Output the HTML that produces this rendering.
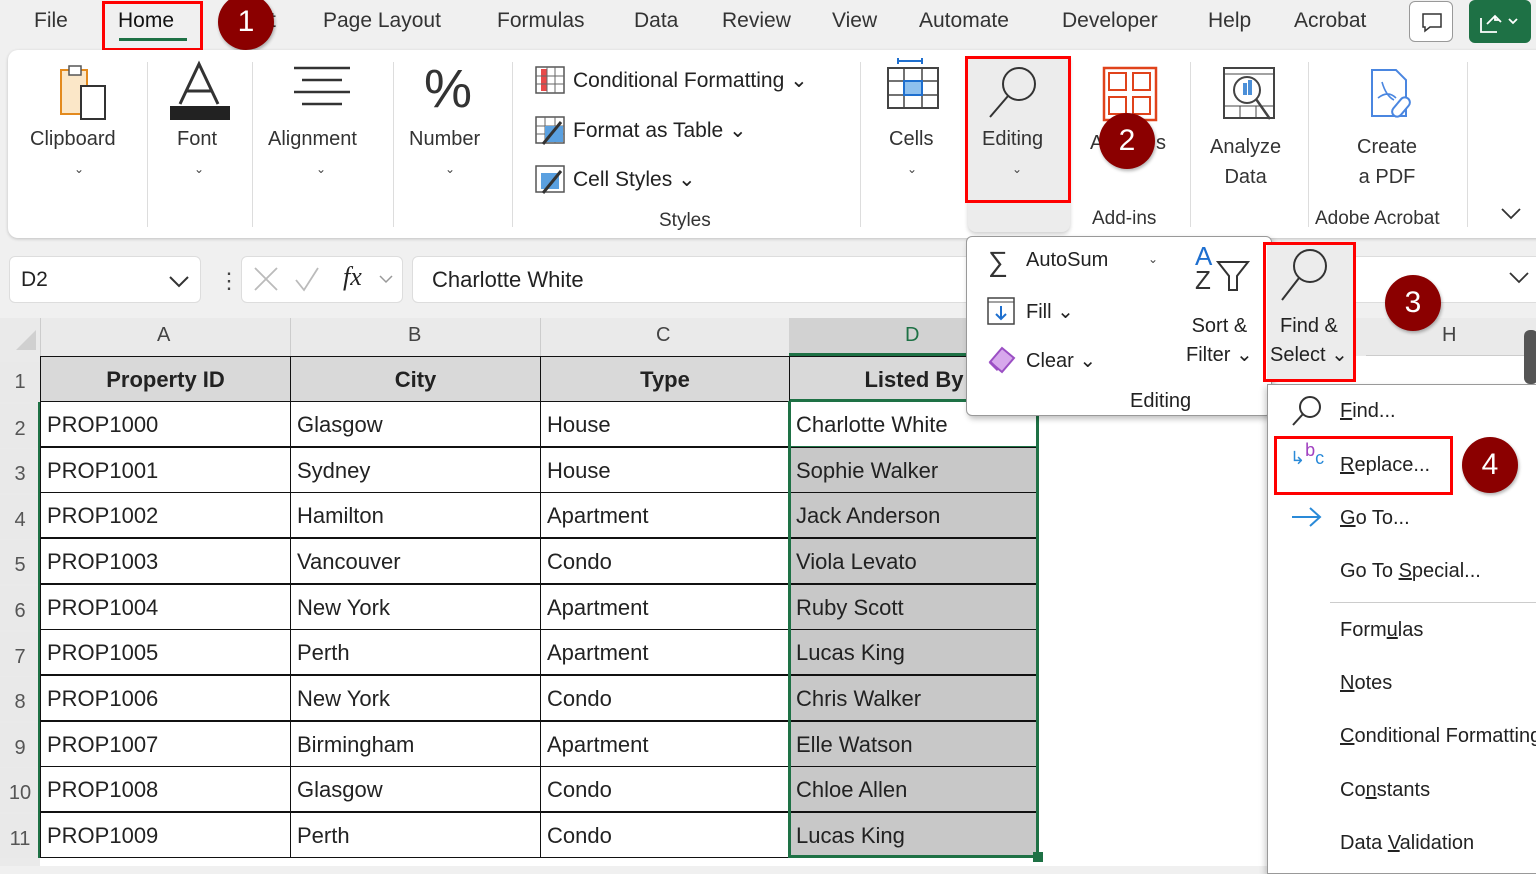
<!DOCTYPE html>
<html><head><meta charset="utf-8"><style>
*{margin:0;padding:0;box-sizing:border-box}
body{width:1536px;height:866px;overflow:hidden;background:#f0f0f0;font-family:"Liberation Sans",sans-serif;color:#222;position:relative}
.a{position:absolute}
.t{font-size:21px;color:#333;top:9px}
.rb{left:8px;top:50px;width:1540px;height:188px;background:#fff;border-radius:10px;box-shadow:0 1px 3px rgba(0,0,0,.2)}
.lbl{font-size:20px;color:#333;text-align:center}
.sep{width:1px;background:#ddd;top:62px;height:165px}
.chev{font-size:12px;color:#444}
.circ{width:56px;height:56px;border-radius:50%;background:#8b0000;color:#fff;font-size:30px;text-align:center;line-height:56px;box-shadow:1px 2px 3px rgba(0,0,0,.3)}
.red{border:3px solid #f00}
.cell{position:absolute;height:46px;border:1.5px solid #111;font-size:22px;line-height:46px;padding-left:6px;background:#fff;white-space:nowrap;overflow:hidden}
.rh{position:absolute;left:0;width:40px;font-size:20px;color:#555;text-align:center;background:#e9e9e9}
.mi{position:absolute;left:1340px;font-size:20px;color:#222;white-space:nowrap}
</style></head><body>
<!-- tabs -->
<div class="a t" style="left:34px">File</div>
<div class="a t" style="left:118px;color:#111">Home</div>
<div class="a" style="left:119px;top:38px;width:68px;height:3px;background:#1e7145"></div>
<div class="a t" style="left:270px">t</div>
<div class="a t" style="left:323px">Page Layout</div>
<div class="a t" style="left:497px">Formulas</div>
<div class="a t" style="left:634px">Data</div>
<div class="a t" style="left:722px">Review</div>
<div class="a t" style="left:832px">View</div>
<div class="a t" style="left:919px">Automate</div>
<div class="a t" style="left:1062px">Developer</div>
<div class="a t" style="left:1208px">Help</div>
<div class="a t" style="left:1294px">Acrobat</div>
<div class="a" style="left:1409px;top:1px;width:44px;height:41px;border:1px solid #999;border-radius:6px;background:#fff"><svg width="44" height="40"><path d="M13 12h18v13H20l-5 4v-4h-2z" fill="none" stroke="#333" stroke-width="1.5"/></svg></div>
<div class="a" style="left:1469px;top:0;width:62px;height:43px;border-radius:6px;background:#1e7145"><svg width="62" height="43"><path d="M12 18v14h16M18 24l8-8 6 6M26 16v4h4" fill="none" stroke="#fff" stroke-width="1.8"/><path d="M40 19l4 4 4-4" fill="none" stroke="#fff" stroke-width="1.8"/></svg></div>
<div class="a red" style="left:102px;top:1px;width:101px;height:50px"></div>
<div class="a circ" style="left:218px;top:-6px">1</div>

<!-- ribbon -->
<div class="a rb"></div>
<svg class="a" style="left:55px;top:60px" width="60" height="65"><rect x="6" y="10" width="26" height="44" fill="#fbe7c8" stroke="#e38a1e" stroke-width="2"/><rect x="14" y="6" width="12" height="9" fill="#fff" stroke="#555" stroke-width="1.5"/><rect x="26" y="26" width="24" height="33" fill="#fff" stroke="#333" stroke-width="2"/></svg>
<div class="a lbl" style="left:30px;top:128px">Clipboard</div><div class="a chev" style="left:74px;top:162px">⌄</div>
<div class="a sep" style="left:147px"></div>
<svg class="a" style="left:168px;top:60px" width="64" height="62"><path d="M12 44L31 4L50 44M18 31h26" fill="none" stroke="#333" stroke-width="3"/><rect x="2" y="46" width="60" height="14" fill="#222"/></svg>
<div class="a lbl" style="left:177px;top:128px">Font</div><div class="a chev" style="left:194px;top:162px">⌄</div>
<div class="a sep" style="left:252px"></div>
<svg class="a" style="left:292px;top:66px" width="60" height="45"><path d="M2 2h56M10 14h40M2 26h56M10 38h40" stroke="#333" stroke-width="2.5"/></svg>
<div class="a lbl" style="left:268px;top:128px">Alignment</div><div class="a chev" style="left:316px;top:162px">⌄</div>
<div class="a sep" style="left:393px"></div>
<div class="a" style="left:424px;top:58px;font-size:54px;color:#333">%</div>
<div class="a lbl" style="left:409px;top:128px">Number</div><div class="a chev" style="left:445px;top:162px">⌄</div>
<div class="a sep" style="left:512px"></div>
<svg class="a" style="left:535px;top:66px" width="30" height="30"><rect x="1" y="1" width="28" height="26" fill="#fff" stroke="#555" stroke-width="1.5"/><rect x="6" y="3" width="6" height="22" fill="#e84a4a"/><path d="M1 10h28M1 18h28M12 1v26M20 1v26" stroke="#666"/></svg>
<div class="a" style="left:573px;top:68px;font-size:21px">Conditional Formatting ⌄</div>
<svg class="a" style="left:535px;top:116px" width="30" height="30"><rect x="1" y="1" width="28" height="26" fill="#fff" stroke="#555" stroke-width="1.5"/><path d="M1 10h28M1 18h28M10 1v26M20 1v26" stroke="#666"/><rect x="10" y="10" width="18" height="16" fill="#5aa0e0"/><path d="M8 28L26 6" stroke="#333" stroke-width="3"/></svg>
<div class="a" style="left:573px;top:118px;font-size:21px">Format as Table ⌄</div>
<svg class="a" style="left:535px;top:165px" width="30" height="30"><rect x="1" y="1" width="28" height="26" fill="#fff" stroke="#555" stroke-width="1.5"/><rect x="6" y="8" width="18" height="16" fill="#5aa0e0"/><path d="M8 28L26 6" stroke="#333" stroke-width="3"/></svg>
<div class="a" style="left:573px;top:167px;font-size:21px">Cell Styles ⌄</div>
<div class="a lbl" style="left:659px;top:210px;font-size:19px">Styles</div>
<div class="a sep" style="left:860px"></div>
<svg class="a" style="left:886px;top:58px" width="56" height="54"><path d="M12 3h24M12 0v6M36 0v6" stroke="#1e6fcf" stroke-width="2"/><rect x="2" y="10" width="50" height="40" fill="#fff" stroke="#444" stroke-width="2"/><path d="M2 23h50M2 37h50M18 10v40M36 10v40" stroke="#444" stroke-width="1.5"/><rect x="18" y="23" width="18" height="14" fill="#8ec0ee" stroke="#1e6fcf" stroke-width="2"/></svg>
<div class="a lbl" style="left:889px;top:128px">Cells</div><div class="a chev" style="left:907px;top:162px">⌄</div>
<div class="a sep" style="left:1190px"></div>
<div class="a" style="left:968px;top:57px;width:102px;height:175px;background:#ececec;border-radius:0 0 8px 8px;box-shadow:0 2px 4px rgba(0,0,0,.2)"></div>
<svg class="a" style="left:983px;top:60px" width="70" height="60"><circle cx="36" cy="24" r="16" fill="none" stroke="#333" stroke-width="2"/><path d="M25 36L7 57" stroke="#333" stroke-width="2"/></svg>
<div class="a lbl" style="left:982px;top:128px">Editing</div><div class="a chev" style="left:1012px;top:162px">⌄</div>
<div class="a red" style="left:965px;top:56px;width:106px;height:147px"></div>
<svg class="a" style="left:1102px;top:66px" width="56" height="56"><rect x="2" y="2" width="52" height="52" fill="none" stroke="#e0431b" stroke-width="2.5"/><rect x="7" y="7" width="17" height="17" fill="none" stroke="#e0431b" stroke-width="2"/><rect x="31" y="7" width="17" height="17" fill="none" stroke="#e0431b" stroke-width="2"/><rect x="7" y="31" width="17" height="17" fill="none" stroke="#e0431b" stroke-width="2"/><rect x="31" y="31" width="17" height="17" fill="none" stroke="#e0431b" stroke-width="2"/></svg>
<div class="a lbl" style="left:1090px;top:132px">A</div><div class="a lbl" style="left:1156px;top:132px">s</div>
<div class="a circ" style="left:1099px;top:113px">2</div>
<div class="a lbl" style="left:1092px;top:208px;font-size:19px">Add-ins</div>
<svg class="a" style="left:1222px;top:66px" width="58" height="56"><rect x="2" y="2" width="50" height="50" fill="#fff" stroke="#444" stroke-width="2"/><path d="M2 8h50M2 40h50M18 40v12M34 40v12" stroke="#444"/><circle cx="25" cy="24" r="13" fill="#fff" stroke="#444" stroke-width="2"/><rect x="21" y="17" width="4" height="12" fill="#4b8fd8"/><rect x="26" y="14" width="4" height="15" fill="#4b8fd8"/><path d="M34 33l14 20" stroke="#444" stroke-width="2.5"/></svg>
<div class="a lbl" style="left:1210px;top:132px;line-height:30px">Analyze<br>Data</div>
<div class="a sep" style="left:1308px"></div>
<svg class="a" style="left:1368px;top:68px" width="58" height="58"><path d="M4 2h24l10 10v36H4z" fill="#fff" stroke="#4a86e0" stroke-width="2"/><path d="M14 14q4 14 12 18M10 30q10-8 18 0" fill="none" stroke="#4a86e0" stroke-width="1.6"/><rect x="28" y="28" width="10" height="22" rx="5" transform="rotate(40 33 39)" fill="#fff" stroke="#4a86e0" stroke-width="2"/></svg>
<div class="a lbl" style="left:1357px;top:132px;line-height:30px">Create<br>a PDF</div>
<div class="a lbl" style="left:1315px;top:208px;font-size:19px">Adobe Acrobat</div>
<div class="a sep" style="left:1467px"></div>
<svg class="a" style="left:1500px;top:205px" width="22" height="16"><path d="M2 4l9 9 9-9" fill="none" stroke="#333" stroke-width="1.8"/></svg>

<!-- formula bar -->
<div class="a" style="left:9px;top:256px;width:192px;height:47px;background:#fff;border:1px solid #ddd;border-radius:6px"></div>
<div class="a" style="left:21px;top:268px;font-size:21px">D2</div>
<svg class="a" style="left:168px;top:274px" width="22" height="14"><path d="M2 3l9 9 9-9" fill="none" stroke="#333" stroke-width="2"/></svg>
<div class="a" style="left:218px;top:268px;font-size:22px;color:#444">⋮</div>
<div class="a" style="left:241px;top:256px;width:162px;height:47px;background:#fff;border:1px solid #ddd;border-radius:6px"></div>
<svg class="a" style="left:250px;top:262px" width="150" height="36"><path d="M5 6l22 22M27 6L5 28" stroke="#bbb" stroke-width="1.8"/><path d="M46 18l8 10 14-22" fill="none" stroke="#bbb" stroke-width="1.8"/><path d="M130 14l6 6 6-6" fill="none" stroke="#999" stroke-width="1.5"/></svg>
<div class="a" style="left:343px;top:262px;font-size:26px;font-style:italic;font-family:'Liberation Serif',serif">fx</div>
<div class="a" style="left:412px;top:256px;width:1130px;height:47px;background:#fff;border:1px solid #ddd;border-radius:6px"></div>
<div class="a" style="left:432px;top:267px;font-size:22px">Charlotte White</div>
<svg class="a" style="left:1508px;top:270px" width="22" height="14"><path d="M2 3l9 9 9-9" fill="none" stroke="#333" stroke-width="1.8"/></svg>

<!-- grid -->
<div class="a" style="left:0;top:318px;width:1536px;height:38px;background:#eaeaea"></div>
<div class="a" style="left:0;top:356px;width:40px;height:510px;background:#eaeaea"></div>
<div class="a" style="left:40px;top:356px;width:1496px;height:510px;background:#fff"></div>
<svg class="a" style="left:14px;top:328px" width="24" height="24"><path d="M22 2v20H2z" fill="#d0d0d0"/></svg>
<div class="a" style="left:40px;top:318px;width:1px;height:38px;background:#ccc"></div>
<div class="a" style="left:290px;top:318px;width:1px;height:38px;background:#ccc"></div>
<div class="a" style="left:540px;top:318px;width:1px;height:38px;background:#ccc"></div>
<div class="a" style="left:789px;top:318px;width:250px;height:38px;background:#d2d2d2;border-bottom:3px solid #1e7145"></div>
<div class="a" style="left:157px;top:324px;font-size:20px;color:#444">A</div>
<div class="a" style="left:408px;top:324px;font-size:20px;color:#444">B</div>
<div class="a" style="left:656px;top:324px;font-size:20px;color:#444">C</div>
<div class="a" style="left:905px;top:324px;font-size:20px;color:#1e7145">D</div>
<div class="a" style="left:1442px;top:324px;font-size:20px;color:#444">H</div>
<div class="a" style="left:1366px;top:355px;width:170px;height:1px;background:#ccc"></div>
<div class="a" style="left:1524px;top:330px;width:14px;height:54px;background:#555;border-radius:6px"></div>

<!-- rows -->
<div class="rh" style="top:362px;height:40px;line-height:40px">1</div>
<div class="rh" style="top:404px;height:44px;line-height:50px">2</div>
<div class="rh" style="top:449px;height:44px;line-height:50px">3</div>
<div class="rh" style="top:495px;height:44px;line-height:50px">4</div>
<div class="rh" style="top:540px;height:44px;line-height:50px">5</div>
<div class="rh" style="top:586px;height:44px;line-height:50px">6</div>
<div class="rh" style="top:632px;height:44px;line-height:50px">7</div>
<div class="rh" style="top:677px;height:44px;line-height:50px">8</div>
<div class="rh" style="top:723px;height:44px;line-height:50px">9</div>
<div class="rh" style="top:768px;height:44px;line-height:50px">10</div>
<div class="rh" style="top:814px;height:44px;line-height:50px">11</div>
<div class="a" style="left:38px;top:402px;width:3px;height:456px;background:#1e7145"></div>

<div class="cell" style="left:40px;top:356px;width:251px;background:#d9d9d9;font-weight:bold;text-align:center;padding:0">Property ID</div>
<div class="cell" style="left:290px;top:356px;width:251px;background:#d9d9d9;font-weight:bold;text-align:center;padding:0">City</div>
<div class="cell" style="left:540px;top:356px;width:250px;background:#d9d9d9;font-weight:bold;text-align:center;padding:0">Type</div>
<div class="cell" style="left:789px;top:356px;width:250px;background:#d9d9d9;font-weight:bold;text-align:center;padding:0;border-bottom:3px solid #1e7145">Listed By</div>

<div class="cell" style="left:40px;top:401px;width:251px">PROP1000</div><div class="cell" style="left:290px;top:401px;width:251px">Glasgow</div><div class="cell" style="left:540px;top:401px;width:250px">House</div><div class="cell" style="left:789px;top:401px;width:250px;border-color:#1e7145">Charlotte White</div>
<div class="cell" style="left:40px;top:447px;width:251px">PROP1001</div><div class="cell" style="left:290px;top:447px;width:251px">Sydney</div><div class="cell" style="left:540px;top:447px;width:250px">House</div><div class="cell" style="left:789px;top:447px;width:250px;background:#c8c8c8">Sophie Walker</div>
<div class="cell" style="left:40px;top:492px;width:251px">PROP1002</div><div class="cell" style="left:290px;top:492px;width:251px">Hamilton</div><div class="cell" style="left:540px;top:492px;width:250px">Apartment</div><div class="cell" style="left:789px;top:492px;width:250px;background:#c8c8c8">Jack Anderson</div>
<div class="cell" style="left:40px;top:538px;width:251px">PROP1003</div><div class="cell" style="left:290px;top:538px;width:251px">Vancouver</div><div class="cell" style="left:540px;top:538px;width:250px">Condo</div><div class="cell" style="left:789px;top:538px;width:250px;background:#c8c8c8">Viola Levato</div>
<div class="cell" style="left:40px;top:584px;width:251px">PROP1004</div><div class="cell" style="left:290px;top:584px;width:251px">New York</div><div class="cell" style="left:540px;top:584px;width:250px">Apartment</div><div class="cell" style="left:789px;top:584px;width:250px;background:#c8c8c8">Ruby Scott</div>
<div class="cell" style="left:40px;top:629px;width:251px">PROP1005</div><div class="cell" style="left:290px;top:629px;width:251px">Perth</div><div class="cell" style="left:540px;top:629px;width:250px">Apartment</div><div class="cell" style="left:789px;top:629px;width:250px;background:#c8c8c8">Lucas King</div>
<div class="cell" style="left:40px;top:675px;width:251px">PROP1006</div><div class="cell" style="left:290px;top:675px;width:251px">New York</div><div class="cell" style="left:540px;top:675px;width:250px">Condo</div><div class="cell" style="left:789px;top:675px;width:250px;background:#c8c8c8">Chris Walker</div>
<div class="cell" style="left:40px;top:721px;width:251px">PROP1007</div><div class="cell" style="left:290px;top:721px;width:251px">Birmingham</div><div class="cell" style="left:540px;top:721px;width:250px">Apartment</div><div class="cell" style="left:789px;top:721px;width:250px;background:#c8c8c8">Elle Watson</div>
<div class="cell" style="left:40px;top:766px;width:251px">PROP1008</div><div class="cell" style="left:290px;top:766px;width:251px">Glasgow</div><div class="cell" style="left:540px;top:766px;width:250px">Condo</div><div class="cell" style="left:789px;top:766px;width:250px;background:#c8c8c8">Chloe Allen</div>
<div class="cell" style="left:40px;top:812px;width:251px">PROP1009</div><div class="cell" style="left:290px;top:812px;width:251px">Perth</div><div class="cell" style="left:540px;top:812px;width:250px">Condo</div><div class="cell" style="left:789px;top:812px;width:250px;background:#c8c8c8">Lucas King</div>
<div class="a" style="left:788px;top:401px;width:3px;height:457px;background:#1e7145"></div>
<div class="a" style="left:1036px;top:401px;width:3px;height:457px;background:#1e7145"></div>
<div class="a" style="left:788px;top:855px;width:251px;height:3px;background:#1e7145"></div>
<div class="a" style="left:1033px;top:852px;width:10px;height:10px;background:#1e7145"></div>

<!-- editing dropdown -->
<div class="a" style="left:966px;top:236px;width:306px;height:180px;background:#fff;border:1px solid #999;border-radius:6px;box-shadow:2px 3px 6px rgba(0,0,0,.25)"></div>
<div class="a" style="left:988px;top:246px;font-size:28px;color:#333">∑</div>
<div class="a" style="left:1026px;top:249px;font-size:20px">AutoSum</div><div class="a chev" style="left:1148px;top:252px">⌄</div>
<svg class="a" style="left:986px;top:296px" width="30" height="30"><rect x="2" y="2" width="26" height="26" fill="#fff" stroke="#444" stroke-width="1.5"/><path d="M2 6h26" stroke="#444"/><path d="M15 10v13M10 18l5 5 5-5" fill="none" stroke="#1e6fcf" stroke-width="2"/></svg>
<div class="a" style="left:1026px;top:299px;font-size:20px">Fill ⌄</div>
<svg class="a" style="left:986px;top:344px" width="32" height="32"><path d="M4 18L16 4l12 10-12 14z" fill="#d7a8ec" stroke="#9b4fc4" stroke-width="2"/><path d="M4 18l8 8" stroke="#9b4fc4" stroke-width="3"/></svg>
<div class="a" style="left:1026px;top:348px;font-size:20px">Clear ⌄</div>
<div class="a" style="left:1195px;top:244px;font-size:26px;color:#1e6fcf;line-height:24px">A<br><span style="color:#333">Z</span></div>
<svg class="a" style="left:1215px;top:258px" width="38" height="36"><path d="M3 4h30L22 18v14l-8 0V18z" fill="none" stroke="#333" stroke-width="2"/></svg>
<div class="a" style="left:1186px;top:312px;font-size:20px;line-height:29px;text-align:center">Sort &amp;<br>Filter ⌄</div>
<div class="a" style="left:1267px;top:242px;width:88px;height:140px;background:#ececec"></div>
<svg class="a" style="left:1272px;top:244px" width="70" height="60"><circle cx="38" cy="22" r="16" fill="none" stroke="#333" stroke-width="2"/><path d="M27 34L10 56" stroke="#333" stroke-width="2"/></svg>
<div class="a" style="left:1270px;top:312px;font-size:20px;line-height:29px;text-align:center">Find &amp;<br>Select ⌄</div>
<div class="a red" style="left:1263px;top:242px;width:93px;height:140px"></div>
<div class="a" style="left:1130px;top:390px;font-size:20px">Editing</div>
<div class="a circ" style="left:1385px;top:275px">3</div>

<!-- find & select menu -->
<div class="a" style="left:1267px;top:384px;width:280px;height:490px;background:#fff;border:1px solid #999;box-shadow:-2px 3px 6px rgba(0,0,0,.2)"></div>
<svg class="a" style="left:1290px;top:394px" width="34" height="34"><circle cx="20" cy="13" r="10" fill="none" stroke="#333" stroke-width="2"/><path d="M13 20L3 31" stroke="#333" stroke-width="2"/></svg>
<div class="mi" style="top:400px"><u>F</u>ind...</div>
<div class="a" style="left:1290px;top:448px;font-size:18px"><span style="color:#2a8ad8">↳</span><span style="color:#a040c0;position:relative;top:-8px">b</span><span style="color:#2a8ad8">c</span></div>
<div class="mi" style="top:454px"><u>R</u>eplace...</div>
<div class="a red" style="left:1274px;top:436px;width:179px;height:59px"></div>
<div class="a circ" style="left:1462px;top:437px">4</div>
<svg class="a" style="left:1290px;top:505px" width="34" height="24"><path d="M2 12h28M20 3l10 9-10 9" fill="none" stroke="#2a8ad8" stroke-width="2"/></svg>
<div class="mi" style="top:507px"><u>G</u>o To...</div>
<div class="mi" style="top:560px">Go To <u>S</u>pecial...</div>
<div class="a" style="left:1330px;top:602px;width:206px;height:1px;background:#ccc"></div>
<div class="mi" style="top:619px">Form<u>u</u>las</div>
<div class="mi" style="top:672px"><u>N</u>otes</div>
<div class="mi" style="top:725px"><u>C</u>onditional Formatting</div>
<div class="mi" style="top:779px">Co<u>n</u>stants</div>
<div class="mi" style="top:832px">Data <u>V</u>alidation</div>
</body></html>
